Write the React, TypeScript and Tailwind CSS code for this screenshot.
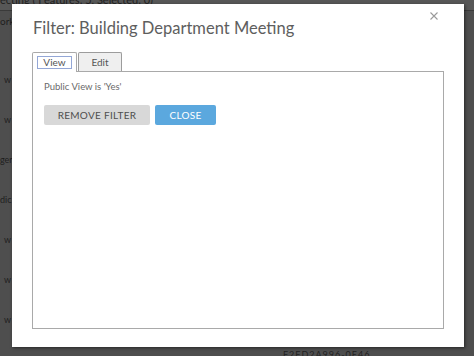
export default function App() {
  const rows = ["w", "w", "ger", "dic", "w", "w", "w", "u"];

  return (
    <main className="relative h-[356px] w-[474px] overflow-hidden bg-[#4e4e4e] font-['Lato','Open_Sans',sans-serif]">
      {/* table behind the overlay */}
      <div className="h-[10px] overflow-hidden bg-[#575757] text-[11px] leading-[12px] text-[#222]">
        <div className="-mt-[6px] whitespace-nowrap">ecting ( Features: 5, Selected: 0)</div>
      </div>
      <div className="h-[50px] border-t border-[#3a3a3a] pt-[4px] text-[10px] leading-[12px] text-[#1e1e1e]">
        ork
      </div>
      {rows.map((r, i) => (
        <div key={i} className="flex h-[40px] items-center">
          <div className="w-[11px] text-right text-[9px] leading-[12px] text-[#1e1e1e]">{r}</div>
          {i === 7 && (
            <div className="ml-[272px] self-start pt-[8px] text-[9px] tracking-[1px] text-[#222]">F2FD2A996-0E46</div>
          )}
        </div>
      ))}

      {/* dialog */}
      <div className="absolute left-[12px] top-[4px] flex h-[343px] w-[452px] flex-col bg-white shadow-[1px_1px_3px_rgba(0,0,0,0.5)]">
        <button className="absolute right-[26px] top-[8px] text-[#9a9a9a]">
          <svg width="8" height="8" viewBox="0 0 8 8" fill="none" stroke="currentColor" strokeWidth="1.1">
            <path d="M0.5 0.5 L7.5 7.5 M7.5 0.5 L0.5 7.5" />
          </svg>
        </button>

        <h1 className="pl-[21px] pt-[12px] text-[16.5px] leading-[24px] text-[#5e5e5e]">
          Filter: Building Department Meeting
        </h1>

        <div className="mx-[20px] mt-[11px] flex flex-1 flex-col">
          {/* tabs */}
          <div className="flex h-[20px] items-end gap-[1px]">
            <div className="relative -mb-px flex h-[20px] w-[45px] items-center justify-center rounded-t-[2px] border border-b-0 border-[#a9a9a9] bg-white">
              <span className="border border-[#94a7d6] px-[5px] text-[10px] leading-[11px] text-[#555]">View</span>
            </div>
            <div className="flex h-[19px] w-[44px] items-center justify-center rounded-t-[2px] border border-b-0 border-[#9c9c9c] bg-[#efefef] text-[10px] text-[#555]">
              Edit
            </div>
          </div>

          {/* panel */}
          <div className="mb-[18px] flex-1 border border-[#a9a9a9] px-[11px] pt-[9px]">
            <p className="text-[9.5px] leading-[12px] text-[#6a6a6a]">Public View is 'Yes'</p>
            <div className="mt-[12px] flex gap-[5px]">
              <button className="h-[20px] w-[106px] rounded-[2px] bg-[#d8d8d8] text-[10px] tracking-[0.3px] text-[#4e4e4e]">
                REMOVE FILTER
              </button>
              <button className="h-[20px] w-[61px] rounded-[2px] bg-[#5ba8de] text-[10px] tracking-[0.3px] text-white">
                CLOSE
              </button>
            </div>
          </div>
        </div>
      </div>
    </main>
  );
}
